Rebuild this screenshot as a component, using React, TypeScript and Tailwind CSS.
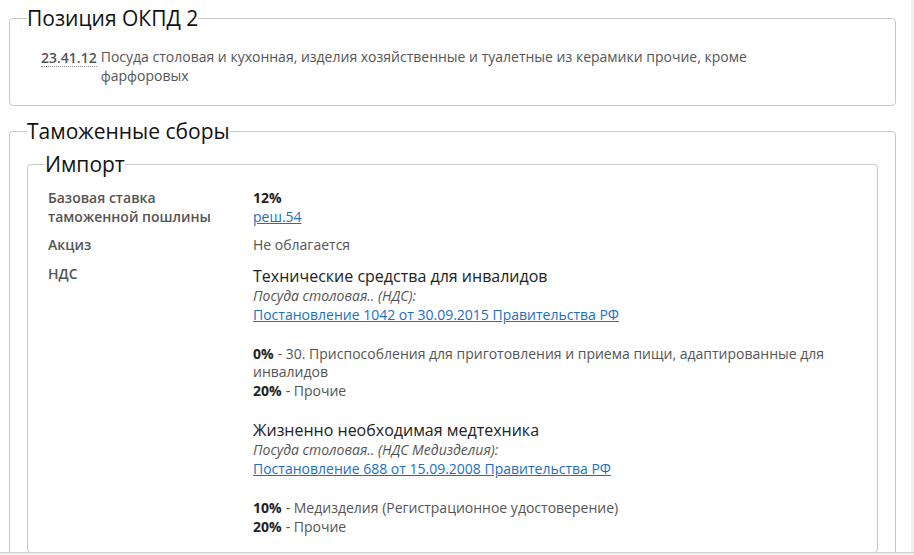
import React from 'react';

const font = { fontFamily: '"Open Sans", "Liberation Sans", sans-serif' };

function Fieldset({ title, className = '', children }: { title: string; className?: string; children: React.ReactNode }) {
  return (
    <fieldset className={`rounded-[4px] border border-[#c9c9c9] px-[17px] ${className}`}>
      <legend className="px-0 text-[21px] leading-[28px] text-[#111]">{title}</legend>
      {children}
    </fieldset>
  );
}

function Row({ label, children }: { label: React.ReactNode; children: React.ReactNode }) {
  return (
    <div className="flex">
      <div className="w-[205px] shrink-0 font-semibold text-[#555]">{label}</div>
      <div className="flex-1 text-[#555]">{children}</div>
    </div>
  );
}

function VatGroup({ title, note, link, lines }: { title: string; note: string; link: string; lines: [string, string][] }) {
  return (
    <div>
      <div className="text-[16px] leading-[22px] text-[#222]">{title}</div>
      <div className="italic">{note}</div>
      <a href="#" className="text-[#1b6fbd] underline">{link}</a>
      <div className="mt-[20.5px]">
        {lines.map(([pct, text]) => (
          <div key={pct + text}>
            <b className="mr-[4px] font-bold text-[#222]">{pct}</b>- {text}
          </div>
        ))}
      </div>
    </div>
  );
}

export default function App() {
  return (
    <div className="flex h-[555px] flex-col bg-white text-[14px] leading-[18.6px]" style={font}>
      <div className="flex flex-1 overflow-hidden">
        <main className="flex-1 overflow-hidden pl-[9px] pr-[15px] pt-[4px]">
          <Fieldset title="Позиция ОКПД 2" className="pb-[20px]">
            <div className="mt-[16px] flex pl-[14px] text-[#555]">
              <abbr className="mr-[4px] mt-[1px] shrink-0 self-start border-b border-dotted border-[#888] font-semibold leading-[17px] no-underline">23.41.12</abbr>
              <span className="pr-[110px]">
                Посуда столовая и кухонная, изделия хозяйственные и туалетные из керамики прочие, кроме фарфоровых
              </span>
            </div>
          </Fieldset>

          <Fieldset title="Таможенные сборы" className="mt-[11px] pb-[20px]">
            <Fieldset title="Импорт" className="mt-[5px] pb-[16px]">
              <div className="flex flex-col gap-[10px] pl-[3px] pt-[11px]">
                <Row label={<>Базовая ставка<br />таможенной пошлины</>}>
                  <div className="font-bold text-[#222]">12%</div>
                  <a href="#" className="text-[#1b6fbd] underline">реш.54</a>
                </Row>
                <Row label="Акциз">Не облагается</Row>
                <Row label="НДС">
                  <div className="flex flex-col gap-[19px]">
                    <VatGroup
                      title="Технические средства для инвалидов"
                      note="Посуда столовая.. (НДС):"
                      link="Постановление 1042 от 30.09.2015 Правительства РФ"
                      lines={[
                        ['0%', '30. Приспособления для приготовления и приема пищи, адаптированные для инвалидов'],
                        ['20%', 'Прочие'],
                      ]}
                    />
                    <VatGroup
                      title="Жизненно необходимая медтехника"
                      note="Посуда столовая.. (НДС Медизделия):"
                      link="Постановление 688 от 15.09.2008 Правительства РФ"
                      lines={[
                        ['10%', 'Медизделия (Регистрационное удостоверение)'],
                        ['20%', 'Прочие'],
                      ]}
                    />
                  </div>
                </Row>
              </div>
            </Fieldset>
          </Fieldset>
        </main>
        <div className="w-[3px] shrink-0 bg-[#f0f0f0]" />
      </div>
      <div className="h-[3px] shrink-0 border-t border-[#cfcfcf] bg-[#f0f0f0]" />
    </div>
  );
}
